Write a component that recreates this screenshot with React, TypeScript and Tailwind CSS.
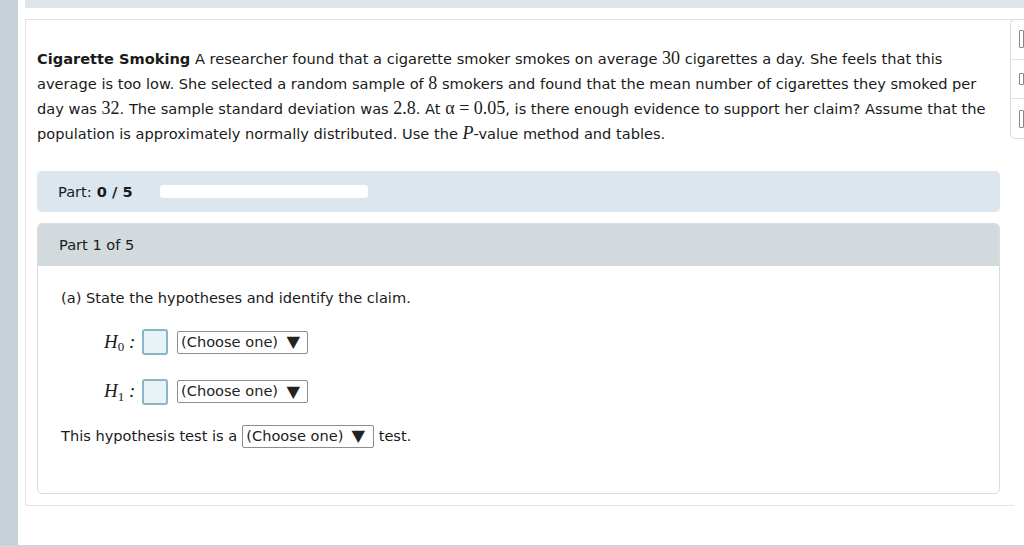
const M = ({ children }: { children: React.ReactNode }) => (
  <span className="font-['Liberation_Serif',serif] text-[18px] leading-none">{children}</span>
);

const Choose = () => (
  <span className="inline-flex items-center h-[23px] border border-[#8d8d8d] rounded-[2px] pl-[3px] pr-[8px] text-[14.6px] leading-none text-[#222] bg-white">
    (Choose one)
    <span className="ml-[9px] text-[16px] scale-x-110">▼</span>
  </span>
);

const Box = () => (
  <span className="inline-block w-[26px] h-[26px] rounded-[3px] border-2 border-[#87b6c6] bg-[#e8f3f8]" />
);

export default function App() {
  return (
    <div className="w-[1024px] h-[547px] overflow-hidden bg-white flex flex-col font-['DejaVu_Sans','Verdana',sans-serif] text-[#1a1a1a]">
      <div className="flex-1 flex">
        <div className="w-[18px] shrink-0 bg-[#c6d1d7]" />
        <div className="flex-1 flex flex-col pl-[7px]">
          <div className="h-[8px] bg-[#dfe5e8]" />
          <div className="mt-[11px] flex">
            <div className="flex-1 h-[487px] border border-[#e3e3e3] rounded-bl-[3px] border-r-0 pl-[11px] pr-[10px] pt-[26px]">
              <p className="text-[14.6px] leading-[25px] w-[965px] pr-[4px]">
                <b>Cigarette Smoking</b> A researcher found that a cigarette smoker smokes on average <M>30</M> cigarettes a day. She feels that this average is too low. She selected a random sample of <M>8</M> smokers and found that the mean number of cigarettes they smoked per day was <M>32</M>. The sample standard deviation was <M>2.8</M>. At <M>α = 0.05</M>, is there enough evidence to support her claim? Assume that the population is approximately normally distributed. Use the <M><i>P</i></M>-value method and tables.
              </p>
              <div className="mt-[25px] w-[963px] h-[41px] rounded-[5px] bg-[#dce6ef] flex items-center pl-[21px] text-[14.6px]">
                Part: <b className="ml-[5px]">0 / 5</b>
                <div className="ml-[27px] w-[208px] h-[13px] rounded-[3px] bg-white" />
              </div>
              <div className="mt-[11px] w-[963px] h-[271px] border border-[#dcdcdc] rounded-[5px] overflow-hidden flex flex-col">
                <div className="h-[42px] bg-[#d3dade] flex items-center pl-[21px] text-[14.6px]">Part 1 of 5</div>
                <div className="pl-[23px] pt-[21px] text-[14.6px]">
                  <div>(a) State the hypotheses and identify the claim.</div>
                  <div className="mt-[19px] pl-[43px] flex flex-col gap-[21px]">
                    <div className="flex items-center">
                      <span className="font-['Liberation_Serif',serif] italic text-[19px] w-[38px]">H<sub className="not-italic text-[13px]">0</sub> :</span>
                      <Box />
                      <span className="ml-[9px]"><Choose /></span>
                    </div>
                    <div className="flex items-center">
                      <span className="font-['Liberation_Serif',serif] italic text-[19px] w-[38px]">H<sub className="not-italic text-[13px]">1</sub> :</span>
                      <Box />
                      <span className="ml-[9px]"><Choose /></span>
                    </div>
                  </div>
                  <div className="mt-[19px] flex items-center">
                    This hypothesis test is a <span className="ml-[5px] mr-[5px]"><Choose /></span> test.
                  </div>
                </div>
              </div>
            </div>
            <div className="w-[14px] h-[120px] border border-r-0 border-[#dcdcdc] rounded-l-[5px] flex flex-col ml-[-4px] bg-white">
              <div className="flex-1 border-b border-[#e3e3e3] flex items-center pl-[8px]"><span className="w-[6px] h-[18px] border border-[#888] rounded-[1px]" /></div>
              <div className="flex-1 border-b border-[#e3e3e3] flex items-center pl-[8px]"><span className="w-[6px] h-[12px] border border-[#888] rounded-[1px]" /></div>
              <div className="flex-1 flex items-center pl-[8px]"><span className="w-[6px] h-[18px] border border-[#888] rounded-[1px]" /></div>
            </div>
          </div>
        </div>
      </div>
      <div className="h-[2px] bg-[#d0d6da]" />
    </div>
  );
}
